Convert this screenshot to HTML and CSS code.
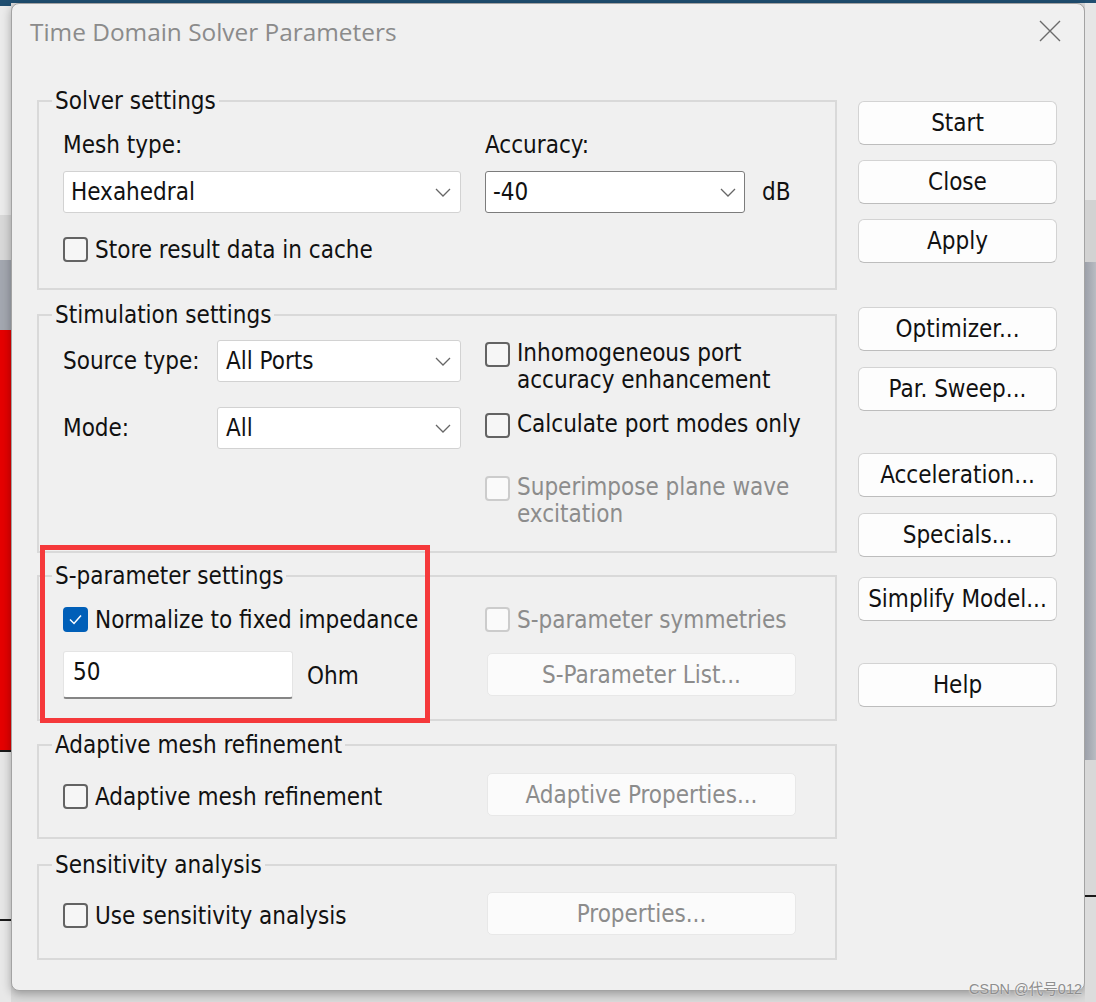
FILE: index.html
```html
<!DOCTYPE html>
<html lang="en">
<head>
  <meta charset="UTF-8" />
  <title>Time Domain Solver Parameters</title>
  <link rel="stylesheet" href="styles.css">
</head>
<body>
  <div class="screen">
    <div class="side side-left">
      <span class="l-blue"></span>
      <span class="l-light"></span>
      <span class="l-line"></span>
      <span class="l-grey"></span>
      <span class="l-red"></span>
      <span class="l-dark"></span>
      <span class="l-pale"></span>
      <span class="l-dark"></span>
      <span class="l-rest"></span>
    </div>

    <div class="dialog">
      <div class="titlebar">
        <span class="title">Time Domain Solver Parameters</span>
        <svg class="close" width="22" height="22" viewBox="0 0 22 22">
          <path d="M1 1 L21 21 M21 1 L1 21" stroke="#6b6b6b" stroke-width="1.4" fill="none" />
        </svg>
      </div>

      <div class="content">
        <div class="groups">
          <!-- Solver settings -->
          <div class="group g-solver">
            <div class="group-title">Solver settings</div>
            <div class="two-col solver-grid">
              <div class="lbl">Mesh type:</div>
              <div class="lbl">Accuracy:</div>
              <div class="combo">
                <span>Hexahedral</span>
                <svg class="chev" width="16" height="9" viewBox="0 0 16 9"><path d="M1 1 L8 8 L15 1" /></svg>
              </div>
              <div class="acc-row">
                <div class="combo combo-acc">
                  <span>-40</span>
                  <svg class="chev" width="16" height="9" viewBox="0 0 16 9"><path d="M1 1 L8 8 L15 1" /></svg>
                </div>
                <span>dB</span>
              </div>
            </div>
            <div class="check-row store-row">
              <span class="box"></span>
              <span>Store result data in cache</span>
            </div>
          </div>

          <!-- Stimulation settings -->
          <div class="group g-stim">
            <div class="group-title">Stimulation settings</div>
            <div class="two-col stim-grid">
              <div class="stim-left">
                <div class="field-row">
                  <span>Source type:</span>
                  <div class="combo">
                    <span>All Ports</span>
                    <svg class="chev" width="16" height="9" viewBox="0 0 16 9"><path d="M1 1 L8 8 L15 1" /></svg>
                  </div>
                </div>
                <div class="field-row">
                  <span>Mode:</span>
                  <div class="combo">
                    <span>All</span>
                    <svg class="chev" width="16" height="9" viewBox="0 0 16 9"><path d="M1 1 L8 8 L15 1" /></svg>
                  </div>
                </div>
              </div>
              <div class="stim-right">
                <div class="check-row multi">
                  <span class="box"></span>
                  <span>Inhomogeneous port<br>accuracy enhancement</span>
                </div>
                <div class="check-row multi modes-row">
                  <span class="box"></span>
                  <span>Calculate port modes only</span>
                </div>
                <div class="check-row multi disabled plane-row">
                  <span class="box"></span>
                  <span>Superimpose plane wave<br>excitation</span>
                </div>
              </div>
            </div>
          </div>

          <!-- S-parameter settings -->
          <div class="group g-sparam">
            <div class="group-title">S-parameter settings</div>
            <div class="two-col sparam-grid">
              <div class="check-row">
                <span class="box on">
                  <svg width="21" height="21" viewBox="0 0 21 21"><path d="M5 10.5 L9 14.5 L16 6.5" stroke="#fff" stroke-width="1.5" fill="none" /></svg>
                </span>
                <span>Normalize to fixed impedance</span>
              </div>
              <div class="check-row disabled">
                <span class="box"></span>
                <span>S-parameter symmetries</span>
              </div>
              <div class="imp-row">
                <div class="field">50</div>
                <span>Ohm</span>
              </div>
              <div class="btn-flat list-btn">S-Parameter List...</div>
            </div>
          </div>

          <!-- Adaptive mesh refinement -->
          <div class="group g-adapt">
            <div class="group-title">Adaptive mesh refinement</div>
            <div class="two-col line-grid adapt-grid">
              <div class="check-row">
                <span class="box"></span>
                <span>Adaptive mesh refinement</span>
              </div>
              <div class="btn-flat">Adaptive Properties...</div>
            </div>
          </div>

          <!-- Sensitivity analysis -->
          <div class="group g-sens">
            <div class="group-title">Sensitivity analysis</div>
            <div class="two-col line-grid sens-grid">
              <div class="check-row">
                <span class="box"></span>
                <span>Use sensitivity analysis</span>
              </div>
              <div class="btn-flat">Properties...</div>
            </div>
          </div>
        </div>

        <div class="actions">
          <div class="btn-set">
            <button class="btn">Start</button>
            <button class="btn">Close</button>
            <button class="btn">Apply</button>
          </div>
          <div class="btn-set set-opt">
            <button class="btn">Optimizer...</button>
            <button class="btn">Par. Sweep...</button>
          </div>
          <div class="btn-set set-acc">
            <button class="btn">Acceleration...</button>
            <button class="btn">Specials...</button>
            <button class="btn simplify">Simplify Model...</button>
          </div>
          <div class="btn-set set-help">
            <button class="btn">Help</button>
          </div>
        </div>
      </div>
    </div>

    <div class="side side-right">
      <span class="r-blue"></span>
      <span class="r-light"></span>
      <span class="r-mid"></span>
      <span class="r-grey"></span>
      <span class="r-pale"></span>
      <span class="r-dark"></span>
      <span class="r-rest"></span>
    </div>

    <div class="annotation"></div>
    <span class="watermark">CSDN @代号012</span>
  </div>
</body>
</html>
```

FILE: styles.css
```css
* {
  margin: 0;
  padding: 0;
  box-sizing: border-box;
}
body {
  width: 1096px;
  height: 1002px;
  overflow: hidden;
  font-family: "DejaVu Sans Condensed", "Liberation Sans", sans-serif;
  font-size: 24px;
  color: #111;
}
.screen {
  position: relative;
  display: flex;
  width: 1096px;
  height: 1002px;
  background: linear-gradient(#1f4e70 0 3px, #dadada 3px);
}

/* app behind the dialog */
.side {
  width: 11px;
  flex: none;
  display: flex;
  flex-direction: column;
}
.side span {
  display: block;
}
.l-blue { height: 6px; background: #1f4e70; }
.l-light { height: 209px; background: #ebebeb; }
.l-line { height: 45px; background: #d8d8d8; }
.l-grey { height: 70px; background: #a3a7b0; }
.l-red { height: 420px; background: #e50000; }
.l-dark { height: 2px; background: #1a1a1a; }
.l-pale { height: 167px; background: #e6e6e6; }
.l-rest { flex: 1; background: #e8e8e8; }
.r-blue { height: 3px; background: #1f4e70; }
.r-light { height: 197px; background: #e6e6e6; }
.r-mid { height: 62px; background: #d2d2d2; }
.r-grey { height: 498px; background: linear-gradient(90deg, #9ca0a9, #b9bcc2); }
.r-pale { height: 135px; background: #d8d8d8; }
.r-dark { height: 2px; background: #1a1a1a; }
.r-rest { flex: 1; background: #dcdcdc; }

/* dialog */
.dialog {
  width: 1074px;
  height: 988px;
  margin-top: 3px;
  flex: none;
  background: #f0f0f0;
  border: 1px solid #a3a3a3;
  border-radius: 8px;
  box-shadow: 0 3px 10px rgba(0, 0, 0, 0.3);
  display: flex;
  flex-direction: column;
}
.titlebar {
  height: 54px;
  display: flex;
  align-items: center;
  justify-content: space-between;
  padding: 0 23px 0 18px;
}
.title {
  font-family: "Open Sans", "Liberation Sans", sans-serif;
  font-size: 24.4px;
  color: #8b8b8b;
}
.content {
  display: flex;
  gap: 21px;
  padding-left: 25px;
}
.groups {
  width: 800px;
  padding-top: 42px;
}

/* group boxes */
.group {
  border: 2px solid #d9d9d9;
  padding-left: 24px;
}
.group-title {
  width: fit-content;
  margin: -14px 0 0 -11px;
  padding: 0 3px;
  line-height: 26px;
  background: #f0f0f0;
}
.g-solver { height: 190px; }
.g-stim { height: 239px; margin-top: 24px; }
.g-sparam { height: 146px; margin-top: 22px; }
.g-adapt { height: 95px; margin-top: 23px; }
.g-sens { height: 96px; margin-top: 25px; }

.two-col {
  display: grid;
  grid-template-columns: 398px 1fr;
  column-gap: 24px;
}
.lbl {
  line-height: 26px;
}
.solver-grid {
  margin-top: 18px;
  row-gap: 13px;
}
.combo {
  height: 42px;
  display: flex;
  align-items: center;
  justify-content: space-between;
  padding: 0 9px 0 7px;
  background: #fff;
  border: 1px solid #d2d2d2;
  border-radius: 3px;
}
.combo-acc {
  width: 260px;
  border: 1.5px solid #7c7c7c;
  padding-right: 8px;
}
.chev path {
  stroke: #666;
  stroke-width: 1.3;
  fill: none;
}
.acc-row {
  display: flex;
  align-items: center;
  gap: 17px;
}

/* checkboxes */
.check-row {
  display: flex;
  align-items: flex-start;
  gap: 7px;
  line-height: 26px;
}
.box {
  width: 25px;
  height: 25px;
  flex: none;
  border: 2px solid #636363;
  border-radius: 4px;
  background: #f6f6f6;
}
.box.on {
  background: #005fb8;
  border-color: #005fb8;
}
.box.on svg {
  display: block;
}
.disabled {
  color: #8c8c8c;
}
.disabled .box {
  border-color: #cccccc;
  background: #fafafa;
}
.store-row {
  margin-top: 24px;
}

/* stimulation */
.stim-grid {
  margin-top: 12px;
}
.stim-left {
  display: flex;
  flex-direction: column;
  gap: 25px;
}
.field-row {
  display: grid;
  grid-template-columns: 154px 244px;
  align-items: center;
  height: 42px;
}
.field-row .combo {
  padding-left: 8px;
}
.stim-right {
  display: flex;
  flex-direction: column;
}
.multi {
  line-height: 27px;
}
.multi .box {
  margin-top: 2px;
}
.modes-row {
  margin-top: 17px;
}
.plane-row {
  margin-top: 36px;
}

/* s-parameters */
.sparam-grid {
  margin-top: 18px;
  row-gap: 18px;
  align-items: start;
}
.imp-row {
  display: flex;
  align-items: center;
  gap: 14px;
}
.field {
  width: 230px;
  height: 48px;
  padding-left: 9px;
  line-height: 40px;
  background: #fff;
  border: 1px solid #e4e4e4;
  border-bottom: 2px solid #858585;
  border-radius: 3px;
}
.imp-row span {
  padding-top: 1px;
}
.btn-flat {
  width: 309px;
  height: 43px;
  margin-left: 2px;
  display: flex;
  align-items: center;
  justify-content: center;
  background: #fbfbfb;
  border: 1px solid #e8e8e8;
  border-radius: 5px;
  color: #8c8c8c;
}
.list-btn {
  margin-top: 2px;
}
.line-grid {
  align-items: center;
}
.line-grid .check-row {
  padding-top: 4px;
}
.adapt-grid {
  margin-top: 15px;
}
.sens-grid {
  margin-top: 14px;
}

/* right-hand buttons */
.actions {
  width: 199px;
  padding-top: 43px;
  display: flex;
  flex-direction: column;
}
.btn-set {
  display: flex;
  flex-direction: column;
  gap: 15px;
}
.btn {
  width: 199px;
  height: 44px;
  font: inherit;
  color: #111;
  background: #fdfdfd;
  border: 1px solid #d3d3d3;
  border-bottom-color: #bdbdbd;
  border-radius: 6px;
}
.set-opt { margin-top: 44px; gap: 16px; }
.set-acc { margin-top: 42px; gap: 16px; }
.set-acc .simplify { margin-top: 4px; }
.set-help { margin-top: 42px; }

/* overlays */
.annotation {
  position: absolute;
  left: 40px;
  top: 545px;
  width: 390px;
  height: 178px;
  border: 5px solid #f5393b;
}
.watermark {
  position: absolute;
  left: 969px;
  top: 977px;
  font-family: "Liberation Sans", "Noto Sans CJK SC", sans-serif;
  font-size: 14.5px;
  color: #8e8e8e;
  text-shadow: 0 0 2px #fff;
}
```
